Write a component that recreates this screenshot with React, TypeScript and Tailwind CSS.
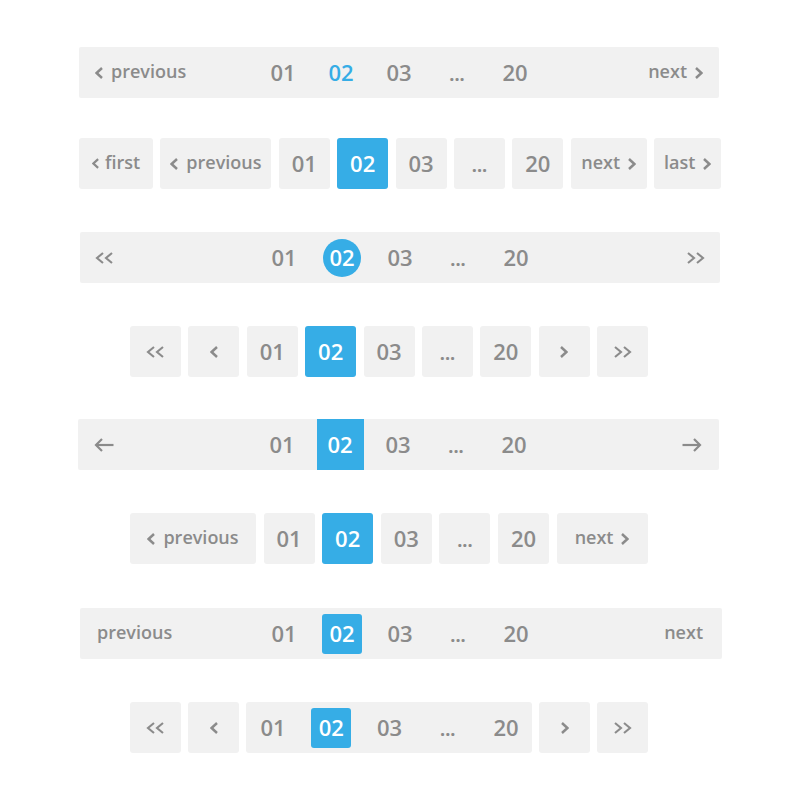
import React from "react";

const FONT = { fontFamily: '"Open Sans", "Noto Sans", Arial, sans-serif' };

const ChevL = ({ w = 8, h = 12 }: { w?: number; h?: number }) => (
  <svg width={w} height={h} viewBox="0 0 8 12" fill="none" stroke="currentColor" strokeWidth={2.5}>
    <path d="M7 1 L1.6 6 L7 11" />
  </svg>
);
const ChevR = ({ w = 8, h = 12 }: { w?: number; h?: number }) => (
  <svg width={w} height={h} viewBox="0 0 8 12" fill="none" stroke="currentColor" strokeWidth={2.5}>
    <path d="M1 1 L6.4 6 L1 11" />
  </svg>
);
const DblL = () => (
  <svg width="19" height="12" viewBox="0 0 19 12" fill="none" stroke="currentColor" strokeWidth={2.1}>
    <path d="M8 1 L2 6 L8 11" />
    <path d="M17 1 L11 6 L17 11" />
  </svg>
);
const DblR = () => (
  <svg width="19" height="12" viewBox="0 0 19 12" fill="none" stroke="currentColor" strokeWidth={2.1}>
    <path d="M2 1 L8 6 L2 11" />
    <path d="M11 1 L17 6 L11 11" />
  </svg>
);
const ArrL = () => (
  <svg width="20" height="14" viewBox="0 0 20 14" fill="none" stroke="currentColor" strokeWidth={2.2}>
    <path d="M19.5 7 H2" />
    <path d="M8 1 L2 7 L8 13" />
  </svg>
);
const ArrR = () => (
  <svg width="20" height="14" viewBox="0 0 20 14" fill="none" stroke="currentColor" strokeWidth={2.2}>
    <path d="M0.5 7 H18" />
    <path d="M12 1 L18 7 L12 13" />
  </svg>
);

const Num = ({ children }: { children: React.ReactNode }) => (
  <span className="text-[22px] font-semibold leading-none pb-[2px]">{children}</span>
);
const Dots = () => <span className="text-[18px] font-bold leading-none pt-[3px]">...</span>;

const Box = ({ w = 51, children, active = false }: { w?: number; children: React.ReactNode; active?: boolean }) => (
  <div
    className={`h-[51px] rounded-[3px] flex items-center justify-center ${active ? "bg-[#36ade6] text-white" : "bg-[#f1f1f1]"}`}
    style={{ width: w }}
  >
    {children}
  </div>
);

const Word = ({ children }: { children: React.ReactNode }) => (
  <span className="text-[18px] font-semibold leading-none pb-[3px]">{children}</span>
);

type Kind = "text" | "circle" | "rect" | "box";

const Numbers = ({ kind }: { kind: Kind }) => {
  const items = ["01", "02", "03", "...", "20"];
  return (
    <div className="flex h-full items-center">
      {items.map((t) => {
        const isActive = t === "02";
        let inner: React.ReactNode = t === "..." ? <Dots /> : <Num>{t}</Num>;
        if (isActive) {
          if (kind === "text") inner = <span className="text-[#36ade6] flex"><Num>02</Num></span>;
          if (kind === "circle")
            inner = (
              <div className="w-[38px] h-[38px] rounded-full bg-[#36ade6] text-white flex items-center justify-center">
                <Num>02</Num>
              </div>
            );
          if (kind === "rect")
            inner = (
              <div className="w-[47px] h-full bg-[#36ade6] text-white flex items-center justify-center">
                <Num>02</Num>
              </div>
            );
          if (kind === "box")
            inner = (
              <div className="w-[40px] h-[40px] rounded-[3px] bg-[#36ade6] text-white flex items-center justify-center">
                <Num>02</Num>
              </div>
            );
        }
        return (
          <div key={t} className="w-[58px] h-full flex items-center justify-center">
            {inner}
          </div>
        );
      })}
    </div>
  );
};

const Bar = ({
  left,
  right,
  kind,
  ml,
  w,
  pl,
  pr,
}: {
  left: React.ReactNode;
  right: React.ReactNode;
  kind: Kind;
  ml: string;
  w: string;
  pl: string;
  pr: string;
}) => (
  <div className={`h-[51px] bg-[#f1f1f1] rounded-[2px] grid grid-cols-[1fr_auto_1fr] items-center ${ml} ${w} ${pl} ${pr}`}>
    <div className="flex items-center justify-start h-full">{left}</div>
    <Numbers kind={kind} />
    <div className="flex items-center justify-end h-full">{right}</div>
  </div>
);

export default function App() {
  return (
    <div className="w-[800px] h-[800px] bg-white text-[#8b8b8b] flex flex-col pt-[47px]" style={FONT}>
      {/* Row 1 */}
      <Bar
        ml="ml-[79px]"
        w="w-[640px]"
        pl="pl-[16px]"
        pr="pr-[16px]"
        kind="text"
        left={
          <span className="flex items-center gap-[8px]">
            <ChevL w={8} h={12} />
            <Word>previous</Word>
          </span>
        }
        right={
          <span className="flex items-center gap-[8px]">
            <Word>next</Word>
            <ChevR w={8} h={12} />
          </span>
        }
      />

      {/* Row 2 */}
      <div className="mt-[40px] ml-[79px] flex gap-[7.4px]">
        <Box w={74}>
          <span className="flex items-center gap-[6px]">
            <ChevL w={7} h={11} />
            <Word>first</Word>
          </span>
        </Box>
        <Box w={111}>
          <span className="flex items-center gap-[8px]">
            <ChevL w={8} h={12} />
            <Word>previous</Word>
          </span>
        </Box>
        <Box><Num>01</Num></Box>
        <Box active><Num>02</Num></Box>
        <Box><Num>03</Num></Box>
        <Box><Dots /></Box>
        <Box><Num>20</Num></Box>
        <Box w={76}>
          <span className="flex items-center gap-[8px]">
            <Word>next</Word>
            <ChevR w={8} h={12} />
          </span>
        </Box>
        <Box w={67}>
          <span className="flex items-center gap-[8px]">
            <Word>last</Word>
            <ChevR w={8} h={12} />
          </span>
        </Box>
      </div>

      {/* Row 3 */}
      <div className="mt-[43px]">
        <Bar
          ml="ml-[80px]"
          w="w-[640px]"
          pl="pl-[15px]"
          pr="pr-[15px]"
          kind="circle"
          left={<DblL />}
          right={<DblR />}
        />
      </div>

      {/* Row 4 */}
      <div className="mt-[43px] ml-[130px] flex gap-[7.4px]">
        <Box><DblL /></Box>
        <Box><ChevL w={8} h={12} /></Box>
        <Box><Num>01</Num></Box>
        <Box active><Num>02</Num></Box>
        <Box><Num>03</Num></Box>
        <Box><Dots /></Box>
        <Box><Num>20</Num></Box>
        <Box><ChevR w={8} h={12} /></Box>
        <Box><DblR /></Box>
      </div>

      {/* Row 5 */}
      <div className="mt-[42px]">
        <Bar
          ml="ml-[78px]"
          w="w-[641px]"
          pl="pl-[16px]"
          pr="pr-[17px]"
          kind="rect"
          left={<ArrL />}
          right={<ArrR />}
        />
      </div>

      {/* Row 6 */}
      <div className="mt-[43px] ml-[130px] flex gap-[7.6px]">
        <Box w={126}>
          <span className="flex items-center gap-[8px]">
            <ChevL w={8} h={12} />
            <Word>previous</Word>
          </span>
        </Box>
        <Box><Num>01</Num></Box>
        <Box active><Num>02</Num></Box>
        <Box><Num>03</Num></Box>
        <Box><Dots /></Box>
        <Box><Num>20</Num></Box>
        <Box w={91}>
          <span className="flex items-center gap-[8px]">
            <Word>next</Word>
            <ChevR w={8} h={12} />
          </span>
        </Box>
      </div>

      {/* Row 7 */}
      <div className="mt-[44px]">
        <Bar
          ml="ml-[80px]"
          w="w-[642px]"
          pl="pl-[17px]"
          pr="pr-[19px]"
          kind="box"
          left={<Word>previous</Word>}
          right={<Word>next</Word>}
        />
      </div>

      {/* Row 8 */}
      <div className="mt-[43px] ml-[130px] flex gap-[7px]">
        <Box><DblL /></Box>
        <Box><ChevL w={8} h={12} /></Box>
        <div className="h-[51px] w-[286px] rounded-[3px] bg-[#f1f1f1] flex items-center pl-[7px] gap-[18.25px]">
          <div className="w-[40px] flex justify-center"><Num>01</Num></div>
          <div className="w-[40px] h-[40px] rounded-[3px] bg-[#36ade6] text-white flex items-center justify-center">
            <Num>02</Num>
          </div>
          <div className="w-[40px] flex justify-center"><Num>03</Num></div>
          <div className="w-[40px] flex justify-center"><Dots /></div>
          <div className="w-[40px] flex justify-center"><Num>20</Num></div>
        </div>
        <Box><ChevR w={8} h={12} /></Box>
        <Box><DblR /></Box>
      </div>
    </div>
  );
}
